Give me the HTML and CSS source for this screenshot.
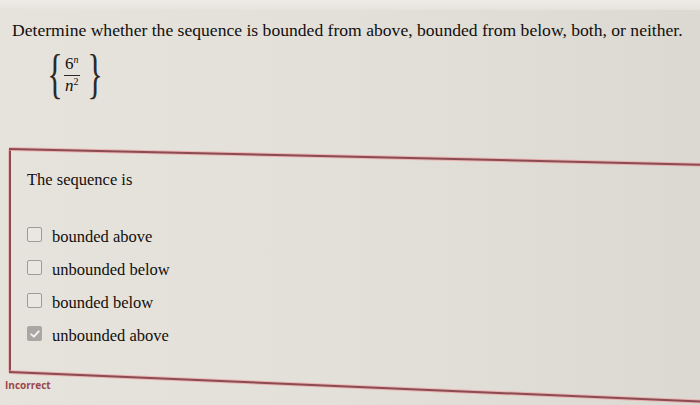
FILE: index.html
```html
<!DOCTYPE html>
<html>
<head>
<meta charset="utf-8">
<link rel="stylesheet" href="styles.css">
</head>
<body>
<div class="page">
  <div class="topband"></div>
  <p class="title">Determine whether the sequence is bounded from above, bounded from below, both, or neither.</p>
  <div class="formula">
    <span class="brace">{</span>
    <span class="frac">
      <span class="num">6<sup><i>n</i></sup></span>
      <span class="den"><i>n</i><sup>2</sup></span>
    </span>
    <span class="brace">}</span>
  </div>
  <div class="answer">
    <p class="prompt">The sequence is</p>
    <ul class="options">
      <li class="option"><span class="box"></span><span class="label">bounded above</span></li>
      <li class="option"><span class="box"></span><span class="label">unbounded below</span></li>
      <li class="option"><span class="box"></span><span class="label">bounded below</span></li>
      <li class="option"><span class="box checked"><svg viewBox="0 0 16 16" width="12" height="12"><path d="M3 8.5 L6.5 11.5 L13 4.5" fill="none" stroke="#f4f2ee" stroke-width="2.6" stroke-linecap="round" stroke-linejoin="round"/></svg></span><span class="label">unbounded above</span></li>
    </ul>
  </div>
  <div class="status">Incorrect</div>
</div>
</body>
</html>
```
FILE: styles.css
```css
html, body {
  margin: 0;
  padding: 0;
}
body {
  width: 700px;
  height: 405px;
  overflow: hidden;
  background: linear-gradient(90deg, #e6e3dc 0%, #e3e0d9 50%, #dcd9d2 100%);
  font-family: "Liberation Serif", "Times New Roman", serif;
  color: #100f0e;
}
.page {
  position: relative;
  height: 405px;
}
.topband {
  height: 10px;
  background: linear-gradient(180deg, #edebe6, #e6e3dc);
}
.title {
  margin: 0;
  padding: 10px 0 0 12px;
  font-size: 17.6px;
  line-height: 20px;
  white-space: nowrap;
}
.formula {
  display: flex;
  align-items: center;
  margin: 10px 0 0 44px;
  height: 48px;
}
.brace {
  font-size: 54px;
  line-height: 48px;
  font-weight: 100;
  transform: scaleX(0.6);
  color: #2a2928;
  width: 16px;
  text-align: center;
}
.frac {
  display: flex;
  flex-direction: column;
  align-items: center;
  font-size: 17px;
  line-height: 17px;
  margin: 0 4px;
}
.frac sup {
  font-size: 10px;
  vertical-align: 6px;
  line-height: 0;
}
.num {
  border-bottom: 1px solid #2a2928;
  padding: 0 1px 3px;
}
.den {
  padding-top: 1px;
}
.answer {
  position: relative;
  margin: 51px 0 0 9px;
  height: 223px;
  border-left: 2px solid #8b4b52;
  box-shadow: -1px 0 0 rgba(235, 150, 150, 0.5);
  padding: 21px 0 0 16px;
  box-sizing: border-box;
}
.answer::before,
.answer::after {
  content: "";
  position: absolute;
  left: -2px;
  width: 720px;
  height: 2px;
  background: #8b4b52;
  box-shadow: 0 -1px 0 rgba(240, 150, 150, 0.6), 0 1px 0 rgba(240, 150, 150, 0.6);
  transform-origin: 0 50%;
}
.answer::before {
  top: -1px;
  transform: rotate(1.3deg);
}
.answer::after {
  bottom: -1px;
  transform: rotate(2.45deg);
}
.prompt {
  margin: 0;
  font-size: 16.5px;
  line-height: 20px;
}
.options {
  list-style: none;
  margin: 30px 0 0 0;
  padding: 0;
}
.option {
  display: flex;
  align-items: center;
  height: 33px;
  font-size: 16.5px;
}
.box {
  width: 15px;
  height: 15px;
  box-sizing: border-box;
  border: 1.5px solid #9e9c98;
  border-radius: 2px;
  background: #e9e7e2;
  margin-right: 10px;
  margin-top: -4px;
  display: flex;
  align-items: center;
  justify-content: center;
}
.box.checked {
  background: #a9a7a3;
  border-color: #a9a7a3;
}
.label {
  line-height: 20px;
}
.status {
  margin: 6px 0 0 5px;
  font-family: "Open Sans", "Liberation Sans", sans-serif;
  font-weight: 700;
  font-size: 10px;
  color: #9a474c;
}
```
